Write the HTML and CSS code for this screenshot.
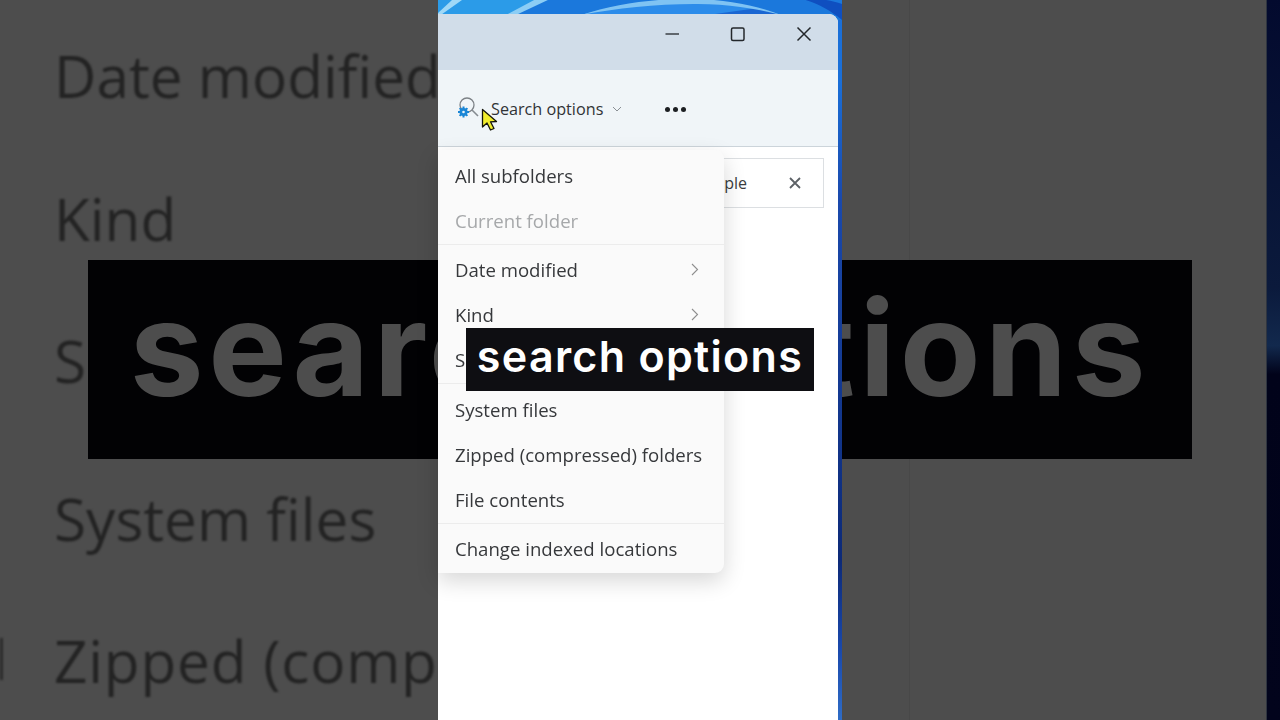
FILE: index.html
```html
<!DOCTYPE html>
<html lang="en">
<head>
  <meta charset="UTF-8" />
  <title>Search options</title>
  <link rel="stylesheet" href="styles.css">
</head>
<body>

<div class="stage">
  <div class="side side-left">
    <div class="zoom-row">Date modified</div>
    <div class="zoom-row">Kind</div>
    <div class="zoom-row">S</div>
    <div class="zoom-rule"></div>
    <div class="zoom-row">System files</div>
    <div class="zoom-row wide">Zipped (comp</div>
    <span class="edge-mark"></span>
  </div>

  <div class="center">
    <svg class="waves" width="404" height="20" viewBox="0 0 404 20">
      <path d="M0 0H404V20H0Z" fill="#1b78dc"/>
      <path d="M0 0H100L68 16H0Z" fill="#2b9be8"/>
      <path d="M143 15C180 4 220 0 260 1C290 2 320 7 343 15Z" fill="#2c8cea"/>
      <path d="M270 15H343L320 8Z" fill="#1a66d2"/>
      <path d="M0 13L14 0H24L0 17Z" fill="#9fd8f7"/>
      <path d="M68 15L98 -1H112L78 15Z" fill="#8ccdf5"/>
      <path d="M143 15C180 3 220 -2 260 -1C290 0 320 6 343 15C315 8 290 4 260 4C220 4 180 8 143 15Z" fill="#7fc3f3"/>
      <path d="M360 -2C378 2 392 10 404 20V4C392 0 380 -2 360 -2Z" fill="#0f4fc0"/>
    </svg>
    <div class="window">
      <div class="titlebar">
        <svg class="win-icon" width="16" height="16" viewBox="0 0 16 16"><path d="M1.5 8H15" stroke="#3a3f44" stroke-width="1.4"/></svg>
        <svg class="win-icon" width="16" height="16" viewBox="0 0 16 16"><rect x="1.5" y="2" width="12.5" height="12.5" rx="1.5" fill="none" stroke="#23272b" stroke-width="1.5"/></svg>
        <svg class="win-icon" width="16" height="16" viewBox="0 0 16 16"><path d="M1.5 1.5L14.5 14.5M14.5 1.5L1.5 14.5" stroke="#23272b" stroke-width="1.5"/></svg>
      </div>
      <div class="toolbar">
        <svg class="search-icon" width="26" height="26" viewBox="0 0 26 26">
          <circle cx="13" cy="10" r="7" fill="none" stroke="#7d8287" stroke-width="1.3"/>
          <path d="M18 15L24 21" stroke="#858b90" stroke-width="1.6"/>
          <path d="M9.5 11.5V22.5M4 17H15M5.6 13.1L13.4 20.9M13.4 13.1L5.6 20.9" stroke="#1a86d6" stroke-width="2"/>
          <circle cx="9.5" cy="17" r="4" fill="#1a86d6"/>
          <circle cx="9.5" cy="17" r="1.3" fill="#eaf1f6"/>
        </svg>
        <span class="toolbar-label">Search options</span>
        <svg class="chevron-down" width="10" height="6" viewBox="0 0 10 6"><path d="M1 1L5 5L9 1" fill="none" stroke="#8a8f94" stroke-width="1"/></svg>
        <span class="dots"><i></i><i></i><i></i></span>
      </div>
      <div class="content">
        <div class="search-chip">
          <span class="chip-text">ple</span>
          <svg width="12" height="12" viewBox="0 0 12 12"><path d="M1 1L11 11M11 1L1 11" stroke="#5c6166" stroke-width="1.8"/></svg>
        </div>
      </div>
    </div>

    <div class="menu">
      <div class="menu-item">All subfolders</div>
      <div class="menu-item disabled">Current folder</div>
      <div class="menu-sep tight"></div>
      <div class="menu-item has-sub">Date modified <svg width="8" height="13" viewBox="0 0 8 13"><path d="M1 1L6.5 6.5L1 12" fill="none" stroke="#8e8e8e" stroke-width="1.1"/></svg></div>
      <div class="menu-item has-sub">Kind <svg width="8" height="13" viewBox="0 0 8 13"><path d="M1 1L6.5 6.5L1 12" fill="none" stroke="#8e8e8e" stroke-width="1.1"/></svg></div>
      <div class="menu-item">Size</div>
      <div class="menu-sep"></div>
      <div class="menu-item">System files</div>
      <div class="menu-item">Zipped (compressed) folders</div>
      <div class="menu-item">File contents</div>
      <div class="menu-sep tight"></div>
      <div class="menu-item">Change indexed locations</div>
    </div>

    <svg class="cursor" width="18" height="24" viewBox="0 0 18 24">
      <path d="M1.5 1.5V19L6 15L9.5 22L13 20.5L9.5 13.8L15.5 13.5Z" fill="#f2ee2e" stroke="#15150a" stroke-width="1.3" stroke-linejoin="round"/>
    </svg>
  </div>

  <div class="side side-right"><span class="faint-line"></span></div>
  <div class="strip"></div>

  <div class="big-caption">search options</div>
  <div class="caption">search options</div>
</div>

</body>
</html>
```

FILE: styles.css
```css
* { box-sizing: border-box; }

body {
  margin: 0; background: #4d4d4d;
  font-family: "Open Sans", "Noto Sans", sans-serif;
  overflow: hidden;
}

.stage {
  position: relative;
  display: flex;
  width: 1280px; height: 720px;
  overflow: hidden;
}

/* blurred, dimmed copies of the video on both sides */
.side { background: #4d4d4d; position: relative; overflow: hidden; flex: none; }

.side-left {
  width: 438px; padding: 4px 0 0 54px;
  color: #232323;
  font-size: 58.5px; white-space: nowrap;
}

.zoom-row {
  height: 142.5px; display: flex; align-items: center;
  filter: blur(0.8px);
}

.zoom-row.wide { letter-spacing: 0.8px; }

.zoom-rule { height: 15px; }

.edge-mark {
  position: absolute; left: 0; top: 638px;
  width: 3px; height: 42px; background: #2c2c2c;
  filter: blur(0.8px);
}

.side-right { width: 424px; }

.faint-line {
  position: absolute; left: 67px; top: 0;
  width: 1px; height: 100%; background: #484848;
}

.strip {
  flex: none; width: 14px;
  background: linear-gradient(#030a2e 0%, #0b1a3c 40%, #12294d 48%, #01031a 52%, #02041c 100%);
  border-left: 1px solid #2f3540;
}

.big-caption {
  position: absolute; left: 88px; top: 260px;
  width: 1104px; height: 199px;
  display: flex; align-items: center; justify-content: center;
  background: #020204; color: #4d4d4d;
  font-family: "Inter", sans-serif; font-weight: 700;
  font-size: 132px; letter-spacing: 4.5px; z-index: 1; padding-bottom: 24px;
  white-space: nowrap;
}

.center {
  position: relative; z-index: 2; flex: none;
  width: 404px; height: 720px;
  padding: 14px 4px 0 0;
  background: linear-gradient(#1a6fd8 0, #1a6fd8 80px, #1a49ac 200px, #0d2a78 560px, #1a49ac 650px, #2f6cc6 720px);
  filter: blur(0.35px);
}

.waves { position: absolute; left: 0; top: 0; }

.window {
  position: relative;
  height: 100%; display: flex; flex-direction: column;
  background: #fff; border-top-right-radius: 9px;
  overflow: hidden;
}

.titlebar {
  height: 56px; flex: none;
  display: flex; align-items: center; justify-content: flex-end;
  gap: 50px; padding: 0 26px 16px 0;
  background: #d1dde9;
}

.toolbar {
  height: 77px; flex: none;
  display: flex; align-items: center;
  padding: 2px 0 0 16px;
  background: #f0f5f8;
  border-bottom: 1px solid #ccd4da;
}

.search-icon { flex: none; margin-top: -2px; }

.toolbar-label {
  margin-left: 11px; margin-right: 9px;
  font-size: 16.2px; color: #303336;
}

.chevron-down { flex: none; }

.dots { display: flex; gap: 3px; margin-left: 43px; }
.dots i { width: 5px; height: 5px; border-radius: 50%; background: #1c1f22; }

.content { flex: 1; padding: 11px 14px 0 0; }

.search-chip {
  height: 50px; margin-left: 260px;
  display: flex; align-items: center; justify-content: flex-end;
  padding-right: 22px; gap: 42px;
  border: 1px solid #dcdfe2;
}

.chip-text { font-size: 16px; color: #3b3d40; }

/* the dropdown sits over the window */
.menu {
  position: absolute; left: 0; top: 150px;
  width: 286px; padding: 3px 0 2px;
  background: #fafafa;
  border-radius: 0 9px 9px 0;
  box-shadow: 0 8px 22px rgba(0,0,0,0.16);
  z-index: 3;
}

.menu-item {
  height: 45px; padding: 0 25px 0 17px;
  display: flex; align-items: center; justify-content: space-between;
  font-size: 18.6px; color: #36383b; white-space: nowrap;
}

.menu-item.disabled { color: #a6a8aa; }
.menu-sep { height: 4px; margin-top: 1px; border-top: 1px solid #ececec; }
.menu-sep.tight { height: 3px; }

.cursor { position: absolute; left: 43px; top: 108px; z-index: 4; }

.caption {
  position: absolute; left: 466px; top: 328px;
  width: 348px; height: 63px;
  display: flex; align-items: center; justify-content: center;
  background: #0e0e12; color: #fff;
  font-family: "Inter", sans-serif; font-weight: 600;
  font-size: 43px; letter-spacing: 1.3px; z-index: 5; padding-bottom: 7px;
  white-space: nowrap;
}
```
